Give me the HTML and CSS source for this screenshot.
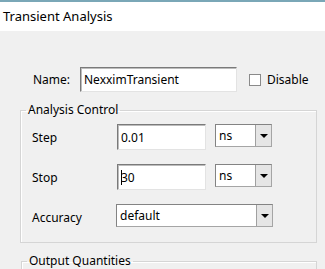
FILE: index.html
```html
<!DOCTYPE html>
<html lang="en">
<head>
    <meta charset="UTF-8">
    <title>Transient Analysis</title>
    <link rel="stylesheet" href="styles.css">
</head>
<body>
    <div class="titlebar">Transient Analysis</div>
    <div class="dialog">
        <div class="nameRow">
            <label class="nameLabel">Name:</label>
            <input class="field nameField" type="text" value="NexximTransient">
            <span class="check"></span>
            <span class="checkText">Disable</span>
        </div>

        <fieldset class="group">
            <legend>Analysis Control</legend>
            <div class="row">
                <span class="rowLabel">Step</span>
                <input class="field numField" type="text" value="0.01">
                <div class="combo unit"><span class="comboText">ns</span><span class="arrow"></span></div>
            </div>
            <div class="row">
                <span class="rowLabel">Stop</span>
                <div class="field numField fake"><span class="caret"></span>30</div>
                <div class="combo unit"><span class="comboText">ns</span><span class="arrow"></span></div>
            </div>
            <div class="row">
                <span class="rowLabel">Accuracy</span>
                <div class="combo wide"><span class="comboText">default</span><span class="arrow"></span></div>
            </div>
        </fieldset>

        <fieldset class="group output">
            <legend>Output Quantities</legend>
        </fieldset>
    </div>
</body>
</html>
```

FILE: styles.css
```css
*{margin:0;padding:0;box-sizing:border-box;}
body{
    width: 325px;
    height: 269px;
    overflow: hidden;
    background: #f0f0f0;
    font-family: "Noto Sans", "Open Sans", sans-serif;
    font-size: 12px;
    color: #000;
}
.titlebar{
    height: 31px;
    border-top: 2px solid #7aa7b7;
    background: #fff;
    padding-left: 3px;
    line-height: 29px;
    font-size: 13px;
}
.dialog{
    padding: 36px 8px 0 20px;
}
.nameRow{
    display: flex;
    align-items: center;
    height: 25px;
}
.nameLabel{
    width: 60px;
    padding-left: 13px;
}
.field{
    height: 26px;
    border: 1px solid;
    border-color: #7a7a7a #e3e3e3 #e3e3e3 #7a7a7a;
    box-shadow: inset 1px 1px 0 #bcbcbc;
    background: #fff;
    padding: 0 3px;
    font: inherit;
    color: #000;
    outline: none;
}
.nameField{
    width: 157px;
    height: 25px;
}
.check{
    width: 12px;
    height: 12px;
    margin-left: 12px;
    border: 1px solid #8a8a8a;
    background: #fff;
}
.checkText{
    margin-left: 6px;
}
.group{
    border: 1px solid #d5d5d5;
    box-shadow: 1px 1px 0 #fff inset;
    margin-top: 10px;
    padding: 0 0 4px 0;
}
.group legend{
    margin-left: 5px;
    padding: 0 2px;
    line-height: 16px;
}
.row{
    display: flex;
    align-items: flex-start;
    height: 40px;
    padding-left: 11px;
}
.rowLabel{
    width: 85px;
    line-height: 40px;
}
.row .field, .row .combo{
    margin-top: 6px;
}
.numField{
    width: 89px;
}
.fake{
    display: flex;
    align-items: center;
}
.caret{
    width: 1px;
    height: 15px;
    background: #000;
    margin-right: -1px;
}
.combo{
    display: flex;
    height: 23px;
    border: 1px solid;
    border-color: #838383 #a5a5a5 #a5a5a5 #838383;
    background: #fff;
}
.unit{
    width: 57px;
    margin-left: 9px;
}
.wide{
    width: 157px;
    margin-left: -1px;
}
.comboText{
    flex: 1;
    padding-left: 3px;
    line-height: 21px;
}
.arrow{
    width: 16px;
    border-left: 1px solid #a0a0a0;
    background: #e5e5e5;
    display: flex;
    align-items: center;
    justify-content: center;
}
.arrow::after{
    content: "";
    border-left: 4px solid transparent;
    border-right: 4px solid transparent;
    border-top: 4px solid #000;
}
.output{
    margin-top: 10px;
    margin-left: 1px;
    height: 17px;
    padding: 0;
}
```
